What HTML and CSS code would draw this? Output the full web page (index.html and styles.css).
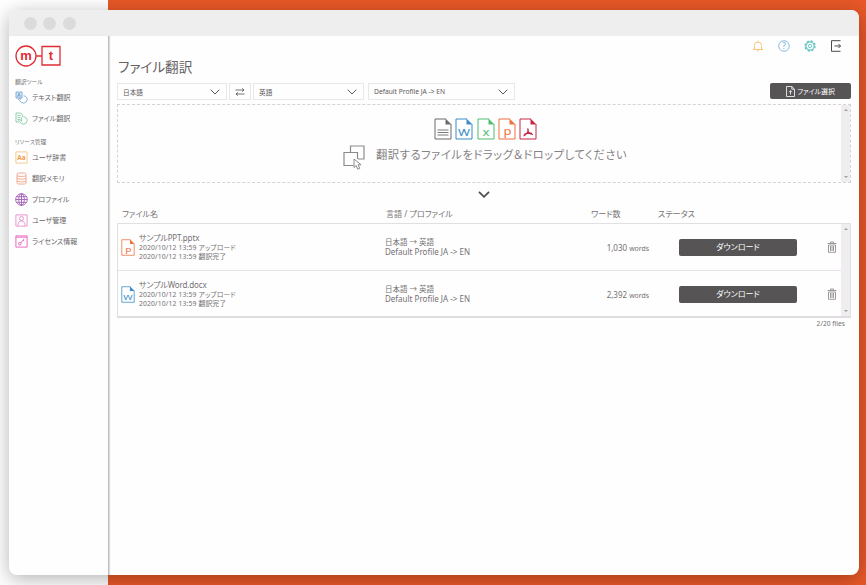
FILE: index.html
```html
<!DOCTYPE html>
<html lang="ja">
<head>
    <meta charset="UTF-8">
    <meta name="viewport" content="width=device-width, initial-scale=1.0">
    <title>ファイル翻訳</title>
    <link rel="stylesheet" href="styles.css">
</head>
<body>
    <svg class="symbols" width="0" height="0">
        <symbol id="page" viewBox="0 0 18 22">
            <path d="M12 1H1v20h16V6" fill="none" stroke="currentColor"/>
            <path d="M11.5 .5v6h6z" fill="currentColor"/>
        </symbol>
        <symbol id="arrow-down" viewBox="0 0 10 6">
            <path d="M.7 .7L5 5L9.3 .7" fill="none" stroke="currentColor"/>
        </symbol>
        <symbol id="trash" viewBox="0 0 10 12">
            <path d="M.5 2.5h9M3.5 2.2V1h3v1.2M1.5 4v7.3h7V4zM3.5 5v5M5 5v5M6.5 5v5" fill="none" stroke="#858284" stroke-width=".8"/>
        </symbol>
    </svg>
    <div class="window">
        <div class="titlebar">
            <span class="dot"></span>
            <span class="dot"></span>
            <span class="dot"></span>
        </div>
        <div class="content">
            <nav class="sidebar">
                <svg class="logo" viewBox="0 0 48 22">
                    <g fill="none" stroke="#df2c35" stroke-width="1.3">
                        <circle cx="11" cy="11" r="10"/>
                        <path d="M21 11h6M27 1.5h18v18.5h-18z"/>
                    </g>
                    <text x="11" y="14.6" class="logo-text">m</text>
                    <text x="36" y="15" class="logo-text">t</text>
                </svg>
                <div class="menu-title first">翻訳ツール</div>
                <ul class="menu">
                    <li>
                        <svg viewBox="0 0 13 13" stroke="#5b97cf" fill="none" stroke-width=".7">
                            <path d="M1 1h6v6H1z" fill="#d9e8f6"/>
                            <path d="M2.5 6L4 2l1.5 4M3 4.7h2"/>
                            <path d="M8.5 4.8c2.5.2 3.7 1.600 3.700 3.700a3.800 3.800 0 0 1-7.400 1L3.200 8.200l1-.8 1.800 1"/>
                        </svg>
                        テキスト翻訳
                    </li>
                    <li>
                        <svg viewBox="0 0 13 13" stroke="#62be8b" fill="none" stroke-width=".7">
                            <path d="M4 10H1V1h4.500l2 2v2M2.500 3.500h3M2.500 5.500h3M2.500 7.500h2"/>
                            <path d="M8.500 4.800c2.500.2 3.700 1.600 3.700 3.700a3.800 3.800 0 0 1-7.400 1L3.700 8.200l1-.8L6.500 9V5.500"/>
                        </svg>
                        ファイル翻訳
                    </li>
                </ul>
                <div class="menu-title second">リソース管理</div>
                <ul class="menu">
                    <li>
                        <svg viewBox="0 0 13 13">
                            <path d="M.9 .9h11.200v11.200H.9z" fill="none" stroke="#f2c27c" stroke-width=".8"/>
                            <text x="6.5" y="8.8" class="aa">Aa</text>
                        </svg>
                        ユーザ辞書
                    </li>
                    <li>
                        <svg viewBox="0 0 13 13" stroke="#f0977a" fill="none" stroke-width=".8">
                            <rect x="2" y="1" width="9" height="11" rx="1.5"/>
                            <path d="M2 4q4.500 1 9 0M2 6.700q4.500 1 9 0M2 9.400q4.500 1 9 0"/>
                        </svg>
                        翻訳メモリ
                    </li>
                    <li>
                        <svg viewBox="0 0 13 13" stroke="#a25cb4" fill="none" stroke-width=".9">
                            <circle cx="6.5" cy="6.5" r="5.800"/>
                            <ellipse cx="6.5" cy="6.5" rx="2.800" ry="5.800"/>
                            <path d="M6.500 .7v11.600M.7 6.500h11.600M1.600 3.700h9.800M1.600 9.300h9.800"/>
                        </svg>
                        プロファイル
                    </li>
                    <li>
                        <svg viewBox="0 0 13 13" stroke="#e87fcb" fill="none" stroke-width=".8">
                            <path d="M.9 .9h11.200v11.200H.9z"/>
                            <circle cx="6.5" cy="4.500" r="2"/>
                            <path d="M3 11.500c0-3 1-4.500 3.500-4.500s3.500 1.500 3.500 4.500"/>
                        </svg>
                        ユーザ管理
                    </li>
                    <li>
                        <svg viewBox="0 0 13 13" stroke="#e65fbd" fill="none" stroke-width=".9">
                            <path d="M.9 .9h11.200v11.200H.9zM.9 2.200h11.200"/>
                            <circle cx="4.800" cy="8.800" r="1.300"/>
                            <path d="M5.700 7.900l3.500-4M8 5l1.200 1"/>
                        </svg>
                        ライセンス情報
                    </li>
                </ul>
            </nav>
            <main class="main">
                <div class="top-icons">
                    <svg viewBox="0 0 12 12" stroke="#f8bd6c" fill="none" stroke-width=".9">
                        <path d="M1 9.500h10M2.500 9.500V5.500a3.500 3.500 0 0 1 7 0v4M5 10.500q1 1.500 2 0M6 2V.8"/>
                    </svg>
                    <svg viewBox="0 0 12 12">
                        <circle cx="6" cy="6" r="5.300" fill="none" stroke="#7ab5e0" stroke-width=".9"/>
                        <text x="6" y="8.800" class="help">?</text>
                    </svg>
                    <svg viewBox="0 0 12 12" stroke="#65c5c3" fill="none">
                        <circle cx="6" cy="6" r="5" stroke-width="1.400" stroke-dasharray="2.200 1.727"/>
                        <circle cx="6" cy="6" r="4.100" stroke-width="1.200"/>
                        <circle cx="6" cy="6" r="1.700" stroke-width=".9"/>
                    </svg>
                    <svg viewBox="0 0 12 12" stroke="#4c494b" fill="none">
                        <path d="M10.500 .7h-9v10.600h9M4.500 6h6M8.500 4l2 2-2 2"/>
                    </svg>
                </div>
                <h1>ファイル翻訳</h1>
                <div class="toolbar">
                    <div class="select lang-from">日本語<svg><use href="#arrow-down"/></svg></div>
                    <div class="swap">
                        <svg viewBox="0 0 10 8" stroke="#555" fill="none" stroke-width=".8">
                            <path d="M.5 2h8.500M7 .3L9 2 7 3.700M9.500 6H1M3 4.300L1 6l2 1.700"/>
                        </svg>
                    </div>
                    <div class="select lang-to">英語<svg><use href="#arrow-down"/></svg></div>
                    <div class="select profile">Default Profile JA -&gt; EN<svg><use href="#arrow-down"/></svg></div>
                    <div class="file-btn">
                        <svg viewBox="0 0 9 11" stroke="#fff" fill="none" stroke-width=".8">
                            <path d="M5.800 .5H.5v10h8V3.200zM5.800 .5v2.700h2.700M4.500 8.500V4.700M3 6.200l1.500-1.500L6 6.200"/>
                        </svg>
                        <span>ファイル選択</span>
                    </div>
                </div>
                <div class="dropzone">
                    <div class="drop-body">
                        <div class="file-types">
                            <svg class="gray" viewBox="0 0 18 22"><use href="#page"/><path d="M3.500 12h11M3.500 14.500h11M3.500 17h11" stroke="currentColor" stroke-width=".9"/></svg>
                            <svg class="blue" viewBox="0 0 18 22"><use href="#page"/><text x="9" y="17.500" class="wide" textLength="12" lengthAdjust="spacingAndGlyphs">W</text></svg>
                            <svg class="green" viewBox="0 0 18 22"><use href="#page"/><text x="9" y="17.500" textLength="7" lengthAdjust="spacingAndGlyphs">x</text></svg>
                            <svg class="orange" viewBox="0 0 18 22"><use href="#page"/><text x="9.500" y="16.500" textLength="8" lengthAdjust="spacingAndGlyphs">p</text></svg>
                            <svg class="red" viewBox="0 0 18 22"><use href="#page"/><path d="M8.500 10.500c2 2-.5 5.500-4 7.500M8.800 11.500c0 3 2.200 4.500 5.200 5M5 16.500c2.500-1.300 5-1.700 8-1.200" fill="none" stroke="currentColor" stroke-width="1.200"/></svg>
                        </div>
                        <div class="drop-label">
                            <svg viewBox="0 0 22 25" stroke="#8d8a8c" fill="none" stroke-width="1.200">
                                <path d="M7.500 7V1h13.500v13h-6"/>
                                <path d="M10.500 20.500H1V7.500h13.500v6.500"/>
                                <path d="M11 14v8.500l2.200-2 1.500 3.700 2-.8-1.600-3.600h3z" fill="#fff" stroke-width="1"/>
                            </svg>
                            <span>翻訳するファイルをドラッグ＆ドロップしてください</span>
                        </div>
                    </div>
                    <div class="scroll"><i class="up"></i><i class="down"></i></div>
                </div>
                <div class="toggle"><svg><use href="#arrow-down"/></svg></div>
                <div class="table-head">
                    <span class="c-file">ファイル名</span>
                    <span class="c-lang">言語 / プロファイル</span>
                    <span class="c-word">ワード数</span>
                    <span class="c-status">ステータス</span>
                </div>
                <div class="table">
                    <div class="rows">
                        <div class="row">
                            <svg class="file-icon orange" viewBox="0 0 18 22"><use href="#page"/><text x="9.500" y="16.500" textLength="8" lengthAdjust="spacingAndGlyphs">p</text></svg>
                            <div class="file">
                                <p class="name">サンプルPPT.pptx</p>
                                <p class="date">2020/10/12 13:59 アップロード</p>
                                <p class="date">2020/10/12 13:59 翻訳完了</p>
                            </div>
                            <div class="lang"><p>日本語 → 英語</p><p class="prof">Default Profile JA -&gt; EN</p></div>
                            <div class="words">1,030 <small>words</small></div>
                            <div class="download">ダウンロード</div>
                            <svg class="trash"><use href="#trash"/></svg>
                        </div>
                        <div class="row">
                            <svg class="file-icon blue" viewBox="0 0 18 22"><use href="#page"/><text x="9" y="17.500" class="wide" textLength="12" lengthAdjust="spacingAndGlyphs">W</text></svg>
                            <div class="file">
                                <p class="name">サンプルWord.docx</p>
                                <p class="date">2020/10/12 13:59 アップロード</p>
                                <p class="date">2020/10/12 13:59 翻訳完了</p>
                            </div>
                            <div class="lang"><p>日本語 → 英語</p><p class="prof">Default Profile JA -&gt; EN</p></div>
                            <div class="words">2,392 <small>words</small></div>
                            <div class="download">ダウンロード</div>
                            <svg class="trash"><use href="#trash"/></svg>
                        </div>
                    </div>
                    <div class="scroll"><i class="up"></i><i class="down"></i></div>
                </div>
                <div class="count">2/20 files</div>
            </main>
        </div>
    </div>
</body>
</html>
```
FILE: styles.css
```css
*{
    margin: 0;
    padding: 0;
    box-sizing: border-box;
}
body{
    width: 866px;
    height: 585px;
    padding: 10px 7px 10px 9px;
    overflow: hidden;
    background: linear-gradient(to right, #fff 108px, #e95828 108px);
    font-family: "Noto Sans", "Noto Sans CJK JP", sans-serif;
    font-feature-settings: "palt";
    color: #747173;
}
.symbols{
    display: block;
}
.window{
    height: 565px;
    border-radius: 8px;
    overflow: hidden;
    background: #fefefe;
    box-shadow: 0 4px 20px rgba(0, 0, 0, 0.3);
}
.titlebar{
    display: flex;
    align-items: center;
    gap: 6.7px;
    height: 26px;
    padding-left: 14.5px;
    background: #eee;
}
.dot{
    width: 13px;
    height: 13px;
    border-radius: 50%;
    background: #dbdbdb;
}
.content{
    display: flex;
    height: 539px;
}

/* sidebar */
.sidebar{
    width: 100px;
    padding: 9px 0 0 6px;
    border-right: 1px solid #bdbbbd;
    box-shadow: 1px 0 1px #dedcde;
}
.logo{
    display: block;
    width: 48px;
    height: 22px;
}
.menu-title{
    height: 9px;
    line-height: 9px;
    font-size: 5.7px;
    white-space: nowrap;
}
.first{
    margin-top: 10.5px;
}
.second{
    margin-top: 9px;
}
.menu{
    list-style: none;
}
.menu li{
    display: flex;
    align-items: center;
    gap: 4px;
    height: 21px;
    font-size: 7px;
    white-space: nowrap;
    color: #686567;
}
.menu svg{
    width: 13px;
    height: 13px;
}

/* text inside icons */
svg text{
    font-family: "Noto Sans", sans-serif;
    font-size: 10px;
    text-anchor: middle;
    fill: currentColor;
}
svg .wide{
    font-size: 9px;
}
svg .logo-text{
    font: bold 13px "Liberation Sans", sans-serif;
    fill: #df2c35;
}
svg .aa{
    font: bold 6.5px "Noto Sans", sans-serif;
    fill: #f39a4a;
}
svg .help{
    font-size: 8px;
    fill: #6eabd9;
}

/* main */
.main{
    width: 750px;
    padding: 0 8px;
}
.top-icons{
    display: flex;
    justify-content: flex-end;
    gap: 14px;
    height: 20px;
    padding: 4px 9px 0 0;
}
.top-icons svg{
    width: 12px;
    height: 12px;
}
h1{
    height: 21px;
    line-height: 21px;
    padding-left: 1px;
    font-size: 13.6px;
    font-weight: normal;
    color: #656264;
}
.toolbar{
    display: flex;
    height: 17px;
    margin-top: 6px;
}
.select{
    display: flex;
    justify-content: space-between;
    align-items: center;
    padding: 0 6px 0 5px;
    border: 1px solid #e9e7e9;
    font-size: 6.7px;
    color: #5c595b;
    white-space: nowrap;
}
.select svg{
    width: 10px;
    height: 6px;
}
.lang-from{
    width: 110px;
}
.swap{
    display: flex;
    align-items: center;
    justify-content: center;
    width: 22px;
    margin: 0 2px;
    border: 1px solid #e9e7e9;
}
.swap svg{
    width: 10px;
    height: 8px;
}
.lang-to{
    width: 111px;
    margin-right: 4px;
}
.profile{
    width: 147px;
}
.file-btn{
    display: flex;
    align-items: center;
    justify-content: center;
    gap: 2px;
    width: 81px;
    height: 16px;
    margin-left: auto;
    border-radius: 2px;
    background: #575456;
    color: #fff;
    font-size: 6.9px;
}
.file-btn svg{
    width: 9px;
    height: 11px;
}
.dropzone{
    display: flex;
    height: 79px;
    margin-top: 4px;
    border: 1px dashed #d6d2d6;
}
.drop-body{
    flex: 1;
    padding-top: 13px;
}
.file-types{
    display: flex;
    gap: 3.3px;
    padding-left: 316px;
}
.file-types svg{
    width: 18px;
    height: 22px;
}
.gray{ color: #6d6a6c; }
.blue{ color: #3b8cc9; }
.green{ color: #4dbd70; }
.orange{ color: #f0713f; }
.red{ color: #c62844; }
.drop-label{
    display: flex;
    gap: 11px;
    height: 26px;
    margin-top: 5px;
    padding-left: 225px;
    font-size: 11.3px;
    letter-spacing: 0.55px;
    line-height: 20px;
    color: #858284;
    white-space: nowrap;
}
.drop-label svg{
    width: 22px;
    height: 25px;
}
.scroll{
    display: flex;
    flex-direction: column;
    justify-content: space-between;
    align-items: center;
    width: 9px;
    padding: 4px 0;
    background: #efedf0;
}
.scroll i{
    border: 2px solid transparent;
}
.scroll .up{
    border-top: none;
    border-bottom: 2px solid #a19ea1;
}
.scroll .down{
    border-bottom: none;
    border-top: 2px solid #a19ea1;
}
.toggle{
    display: flex;
    justify-content: center;
    align-items: center;
    height: 22px;
}
.toggle svg{
    width: 12px;
    height: 7px;
    stroke-width: 1.4;
    color: #4c494b;
}

/* file list */
.table-head{
    display: flex;
    height: 18px;
    padding-left: 5px;
    line-height: 18px;
    font-size: 8.1px;
    white-space: nowrap;
}
.c-file{ width: 264px; }
.c-lang{ width: 205px; }
.c-word{ width: 67px; }
.table{
    display: flex;
    height: 95px;
    border: 1px solid #e2dfe2;
    border-bottom: 2px solid #e0dde0;
}
.rows{
    flex: 1;
}
.row{
    display: flex;
    align-items: center;
    height: 46px;
    padding-left: 3px;
    white-space: nowrap;
}
.row + .row{
    height: 47px;
    border-top: 1px solid #e6e3e6;
}
.file-icon{
    width: 14px;
    height: 19px;
    margin-right: 4px;
}
.file{
    width: 246px;
}
.name{
    height: 10px;
    line-height: 10px;
    font-size: 8px;
    letter-spacing: -0.15px;
}
.date{
    height: 9px;
    line-height: 9px;
    font-size: 6.8px;
    letter-spacing: 0.14px;
}
.lang{
    width: 196px;
    font-size: 7.5px;
    line-height: 10.5px;
}
.prof{
    font-size: 8px;
}
.words{
    width: 68px;
    text-align: right;
    font-size: 8px;
}
.words small{
    font-size: 6.9px;
}
.download{
    width: 118px;
    height: 17px;
    margin-left: 30px;
    border-radius: 2px;
    background: #575456;
    color: #fff;
    text-align: center;
    line-height: 16px;
    font-size: 8px;
}
.trash{
    width: 10px;
    height: 12px;
    margin-left: 30px;
}
.count{
    padding-right: 6px;
    text-align: right;
    font-size: 6.7px;
    line-height: 12px;
}
```
